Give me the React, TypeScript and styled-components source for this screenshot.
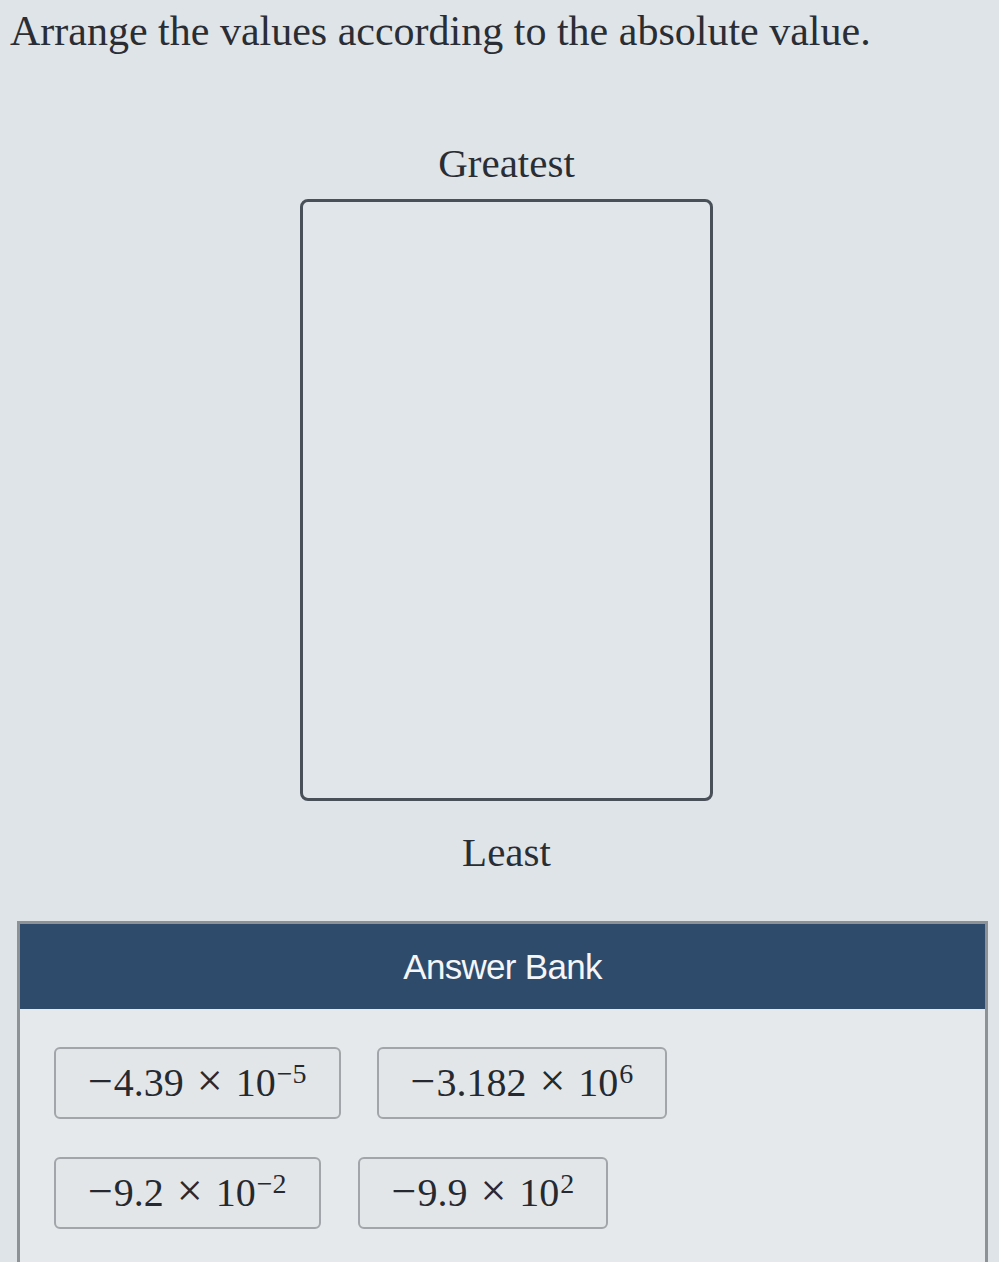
import React from "react";
import styled, { createGlobalStyle } from "styled-components";

const GlobalStyle = createGlobalStyle`
  html, body {
    margin: 0;
    padding: 0;
    background: #dfe4e9;
  }
  body {
    font-family: "Liberation Serif", "Times New Roman", serif;
    color: #2b2f35;
  }
`;

const Page = styled.div`
  min-height: 1262px;
  overflow: hidden;
  background: #dfe4e9;
`;

const Prompt = styled.h1`
  margin: 0;
  padding: 7px 0 0 10px;
  font-family: "Liberation Serif", "Times New Roman", serif;
  font-weight: 400;
  font-size: 42px;
  line-height: 48px;
  color: #2a2e34;
`;

const SortArea = styled.section`
  display: flex;
  flex-direction: column;
  align-items: center;
  padding-left: 14px;
  margin-top: 85px;
`;

const EndLabel = styled.div`
  font-size: 41px;
  line-height: 47px;
  color: #2a2e34;
`;

const DropZone = styled.div`
  box-sizing: border-box;
  width: 413px;
  height: 602px;
  margin: 12px 0 28px;
  border: 3px solid #4a5058;
  border-radius: 8px;
  background: #e1e6ea;
`;

const Bank = styled.section`
  margin: 45px 11px 0 17px;
  border: 3px solid #8d9297;
  border-bottom: none;
  background: #e6e9eb;
`;

const BankHeader = styled.div`
  height: 85px;
  display: flex;
  align-items: center;
  justify-content: center;
  background: #2f4b6c;
  color: #f4f6f8;
  font-family: "Liberation Sans", Arial, sans-serif;
  font-size: 35px;
  letter-spacing: -0.7px;
`;

const BankBody = styled.div`
  display: flex;
  flex-direction: column;
  gap: 38px;
  padding: 38px 34px 80px;
`;

const ChipRow = styled.div<{ $gap: number }>`
  display: flex;
  gap: ${(p) => p.$gap}px;
`;

const Chip = styled.div`
  box-sizing: border-box;
  height: 72px;
  display: inline-flex;
  align-items: center;
  padding: 0 32px 0 32px;
  border: 2px solid #a2a6aa;
  border-radius: 6px;
  background: #e3e6e8;
  font-size: 40px;
  color: #262a30;
  white-space: nowrap;
`;

const Expr = styled.span`
  display: inline-block;
  line-height: 1;
`;

const Minus = styled.span`
  font-size: 1.1em;
  line-height: 0;
  margin-right: 1px;
`;

const Times = styled.span`
  font-size: 1.15em;
  line-height: 0;
  margin: 0 3px;
`;

const Exp = styled.span`
  font-size: 28px;
  line-height: 0;
  vertical-align: 13px;
  margin-left: 1px;
`;

type Value = { mant: string; exp: string };

const Sci = ({ mant, exp }: Value) => (
  <Chip>
    <Expr>
      <Minus>−</Minus>
      {mant} <Times>×</Times> 10
      <Exp>{exp}</Exp>
    </Expr>
  </Chip>
);

const rows: { gap: number; items: Value[] }[] = [
  {
    gap: 36,
    items: [
      { mant: "4.39", exp: "−5" },
      { mant: "3.182", exp: "6" },
    ],
  },
  {
    gap: 37,
    items: [
      { mant: "9.2", exp: "−2" },
      { mant: "9.9", exp: "2" },
    ],
  },
];

export default function App() {
  return (
    <Page>
      <GlobalStyle />
      <Prompt>Arrange the values according to the absolute value.</Prompt>
      <SortArea>
        <EndLabel>Greatest</EndLabel>
        <DropZone />
        <EndLabel>Least</EndLabel>
      </SortArea>
      <Bank>
        <BankHeader>Answer Bank</BankHeader>
        <BankBody>
          {rows.map((row, i) => (
            <ChipRow key={i} $gap={row.gap}>
              {row.items.map((v) => (
                <Sci key={v.mant} {...v} />
              ))}
            </ChipRow>
          ))}
        </BankBody>
      </Bank>
    </Page>
  );
}
